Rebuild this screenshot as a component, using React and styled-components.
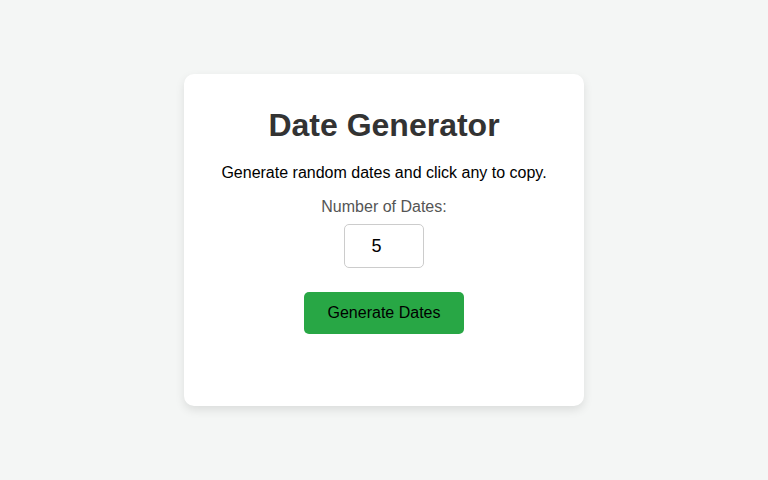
import React, { useState } from "react";
import styled, { createGlobalStyle } from "styled-components";

const GlobalStyle = createGlobalStyle`
  html, body {
    margin: 0;
    padding: 0;
    background: #f4f6f5;
    font-family: "Liberation Sans", Arial, sans-serif;
  }
`;

const App = () => {
  const [count, setCount] = useState(5);
  const [dates, setDates] = useState([]);

  const generate = () => {
    const list = [];
    for (let i = 0; i < count; i++) {
      const d = new Date(Date.now() - Math.floor(Math.random() * 1e12));
      list.push(d.toISOString().slice(0, 10));
    }
    setDates(list);
  };

  return (
    <>
      <GlobalStyle />
      <Page>
        <Card>
          <Title>Date Generator</Title>
          <Intro>Generate random dates and click any to copy.</Intro>
          <Label htmlFor="count">Number of Dates:</Label>
          <NumberInput
            id="count"
            type="number"
            value={count}
            onChange={(ev) => setCount(Number(ev.target.value))}
          />
          <GenerateButton onClick={generate}>Generate Dates</GenerateButton>
          <Results>
            {dates.map((d, i) => (
              <DateItem key={i}>{d}</DateItem>
            ))}
          </Results>
        </Card>
      </Page>
    </>
  );
};

const Page = styled.div`
  height: 480px;
  display: flex;
  align-items: center;
  justify-content: center;
`;

const Card = styled.div`
  width: 400px;
  height: 332px;
  box-sizing: border-box;
  background: #ffffff;
  border-radius: 10px;
  box-shadow: 0 4px 10px rgba(0, 0, 0, 0.1);
  padding: 33px 20px 20px;
  display: flex;
  flex-direction: column;
  align-items: center;
  text-align: center;
`;

const Title = styled.h1`
  margin: 0 0 20px;
  font-size: 32px;
  line-height: 37px;
  font-weight: bold;
  color: #333333;
`;

const Intro = styled.p`
  margin: 0 0 16px;
  font-size: 16px;
  line-height: 18px;
  color: #000000;
`;

const Label = styled.label`
  display: block;
  font-size: 16px;
  line-height: 18px;
  color: #555555;
  margin-bottom: 8px;
`;

const NumberInput = styled.input`
  width: 80px;
  height: 44px;
  box-sizing: border-box;
  padding: 10px 25px 10px 10px;
  font-family: "Liberation Sans", Arial, sans-serif;
  font-size: 18px;
  text-align: center;
  color: #000000;
  border: 1px solid #cccccc;
  border-radius: 5px;
  margin: 0 0 24px;
  -moz-appearance: textfield;
  &::-webkit-inner-spin-button,
  &::-webkit-outer-spin-button {
    -webkit-appearance: none;
    margin: 0;
  }
`;

const GenerateButton = styled.button`
  width: 160px;
  height: 42px;
  box-sizing: border-box;
  background: #28a745;
  color: #000000;
  border: none;
  border-radius: 5px;
  font-family: "Liberation Sans", Arial, sans-serif;
  font-size: 16px;
  cursor: pointer;
  &:hover {
    background: #218838;
  }
`;

const Results = styled.div`
  margin-top: 20px;
`;

const DateItem = styled.div`
  padding: 4px;
  cursor: pointer;
`;

export default App;
